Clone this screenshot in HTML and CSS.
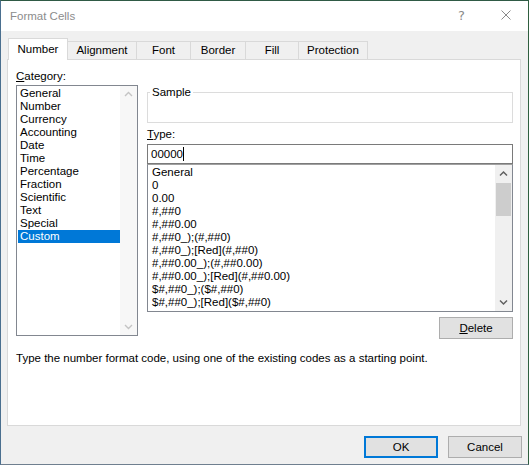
FILE: index.html
```html
<!DOCTYPE html>
<html>
<head>
<meta charset="utf-8">
<link rel="stylesheet" href="styles.css">
</head>
<body>
<div class="dialog">
  <div class="titlebar">
    <span class="title">Format Cells</span>
    <span class="help">?</span>
    <svg class="close" width="10" height="10" viewBox="0 0 10 10"><path d="M0.5 0.5 L9.5 9.5 M9.5 0.5 L0.5 9.5" stroke="#8a8a8a" stroke-width="1" fill="none"/></svg>
  </div>
  <div class="body">
    <div class="tabs">
      <div class="tab active t-number">Number</div>
      <div class="tab t-align">Alignment</div>
      <div class="tab t-font">Font</div>
      <div class="tab t-border">Border</div>
      <div class="tab t-fill">Fill</div>
      <div class="tab t-prot">Protection</div>
    </div>
    <div class="panel">
      <div class="cols">
        <div class="left">
          <div class="label"><u>C</u>ategory:</div>
          <div class="listbox cat">
            <div class="items">
              <div class="item">General</div>
              <div class="item">Number</div>
              <div class="item">Currency</div>
              <div class="item">Accounting</div>
              <div class="item">Date</div>
              <div class="item">Time</div>
              <div class="item">Percentage</div>
              <div class="item">Fraction</div>
              <div class="item">Scientific</div>
              <div class="item">Text</div>
              <div class="item">Special</div>
              <div class="item selected">Custom</div>
            </div>
            <div class="vscroll disabled">
              <svg class="arrow" width="17" height="17" viewBox="0 0 17 17"><path d="M5 10 L8.5 6.5 L12 10" stroke="#c4c4c4" stroke-width="1.4" fill="none"/></svg>
              <div class="track"></div>
              <svg class="arrow" width="17" height="17" viewBox="0 0 17 17"><path d="M5 7 L8.5 10.5 L12 7" stroke="#c4c4c4" stroke-width="1.4" fill="none"/></svg>
            </div>
          </div>
        </div>
        <div class="right">
          <div class="group"><span class="legend">Sample</span></div>
          <div class="label type-label"><u>T</u>ype:</div>
          <div class="input">00000<span class="caret"></span></div>
          <div class="listbox fmt">
            <div class="items">
              <div class="item">General</div>
              <div class="item">0</div>
              <div class="item">0.00</div>
              <div class="item">#,##0</div>
              <div class="item">#,##0.00</div>
              <div class="item">#,##0_);(#,##0)</div>
              <div class="item">#,##0_);[Red](#,##0)</div>
              <div class="item">#,##0.00_);(#,##0.00)</div>
              <div class="item">#,##0.00_);[Red](#,##0.00)</div>
              <div class="item">$#,##0_);($#,##0)</div>
              <div class="item">$#,##0_);[Red]($#,##0)</div>
            </div>
            <div class="vscroll">
              <svg class="arrow" width="17" height="17" viewBox="0 0 17 17"><path d="M5 10.5 L8.5 7 L12 10.5" stroke="#606060" stroke-width="1.5" fill="none"/></svg>
              <div class="track"><div class="thumb"></div></div>
              <svg class="arrow" width="17" height="17" viewBox="0 0 17 17"><path d="M5 6.5 L8.5 10 L12 6.5" stroke="#606060" stroke-width="1.5" fill="none"/></svg>
            </div>
          </div>
          <div class="btnrow"><button class="btn delete"><u>D</u>elete</button></div>
        </div>
      </div>
      <p class="desc">Type the number format code, using one of the existing codes as a starting point.</p>
    </div>
    <div class="footer">
      <button class="btn ok">OK</button>
      <button class="btn cancel">Cancel</button>
    </div>
  </div>
</div>
</body>
</html>
```
FILE: styles.css
```css
* { box-sizing: border-box; }
html, body { margin: 0; padding: 0; background: #ffffff; }
body {
  font-family: "Liberation Sans", Arial, sans-serif;
  font-size: 11.5px;
  color: #000;
}
.dialog {
  width: 529px;
  height: 465px;
  background: #f0f0f0;
  border-left: 1px solid #4a6f8f;
  border-right: 1px solid #2f5f3f;
  border-top: 1px solid #2f5a45;
  border-bottom: 1px solid #6f7f8f;
}
.titlebar {
  height: 30px;
  background: #fff;
  display: flex;
  align-items: center;
  position: relative;
}
.title {
  margin-left: 9px;
  color: #8c8c8c;
  font-size: 11.5px;
}
.help {
  position: absolute;
  left: 457px;
  top: 7px;
  color: #8a8a8a;
  font-size: 13px;
  font-family: "DejaVu Sans", sans-serif;
}
.close {
  position: absolute;
  left: 500px;
  top: 9px;
}
.body {
  padding: 7px 7px 0 6px;
}
.tabs {
  display: flex;
  align-items: flex-end;
  padding-left: 1px;
}
.tab {
  height: 18px;
  border: 1px solid #d9d9d9;
  border-bottom: none;
  background: #f0f0f0;
  margin-left: -1px;
  text-align: center;
  line-height: 17px;
}
.tab.active {
  background: #fff;
  height: 22px;
  margin-bottom: -1px;
  margin-left: 0;
  position: relative;
  z-index: 1;
  line-height: 21px;
}
.t-number { width: 60px; }
.t-align { width: 70px; }
.t-font { width: 55px; }
.t-border { width: 56px; }
.t-fill { width: 54px; }
.t-prot { width: 70px; }
.panel {
  background: #fff;
  border: 1px solid #d9d9d9;
  width: 514px;
  height: 367px;
  padding: 8px 7px 0 8px;
}
.cols {
  display: grid;
  grid-template-columns: 122px 366px;
  column-gap: 9px;
}
.label {
  line-height: 16px;
  height: 16px;
}
.listbox {
  border: 1px solid #828790;
  display: flex;
  background: #fff;
}
.listbox .items {
  flex: 1;
  padding-top: 1px;
}
.item {
  height: 13px;
  line-height: 13px;
  white-space: nowrap;
}
.cat {
  margin-top: 1px;
  height: 251px;
}
.cat .items { padding-left: 1px; }
.cat .item { padding-left: 2px; }
.cat .item.selected {
  background: #0078d7;
  color: #fff;
}
.vscroll {
  width: 17px;
  display: flex;
  flex-direction: column;
  background: #f0f0f0;
}
.vscroll.disabled { background: #f7f7f7; }
.vscroll .arrow { display: block; flex: none; }
.vscroll .track { flex: 1; position: relative; }
.thumb {
  position: absolute;
  left: 1px;
  right: 1px;
  top: 1px;
  height: 33px;
  background: #cdcdcd;
}
.right { padding-top: 24px; }
.group {
  height: 31px;
  border: 1px solid #dcdcdc;
  position: relative;
}
.legend {
  position: absolute;
  left: 2px;
  top: -9px;
  background: #fff;
  padding: 0 2px 0 2px;
  line-height: 16px;
}
.type-label { margin-top: 3px; }
.input {
  margin-top: 2px;
  height: 20px;
  border: 1px solid #7a7a7a;
  padding-left: 3px;
  line-height: 18px;
  display: flex;
  align-items: center;
}
.caret {
  display: inline-block;
  width: 1px;
  height: 14px;
  background: #000;
  margin-left: 0px;
}
.fmt {
  height: 148px;
  border-top-color: #a0a0a0;
}
.fmt .items { padding-left: 4px; }
.btnrow {
  display: flex;
  justify-content: flex-end;
  margin-top: 5px;
}
.btn {
  font-family: inherit;
  font-size: 11.5px;
  color: #000;
  background: #e1e1e1;
  border: 1px solid #adadad;
  width: 74px;
  height: 22px;
  padding: 0;
  margin: 0;
  line-height: 18px;
}
.desc {
  margin: 11px 0 0 0;
  line-height: 16px;
}
.footer {
  display: flex;
  justify-content: flex-end;
  gap: 10px;
  padding-top: 10px;
  margin-right: -1px;
}
.btn.ok {
  border: 2px solid #0078d7;
}
```
